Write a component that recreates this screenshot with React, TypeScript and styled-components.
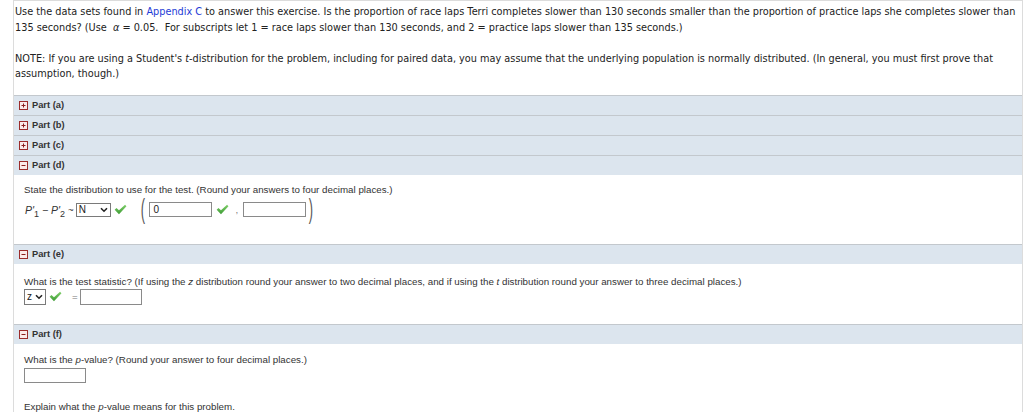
import React from "react";
import styled, { createGlobalStyle } from "styled-components";

const GlobalStyle = createGlobalStyle`
  html, body { margin: 0; padding: 0; background: #ffffff; }
  body { font-family: "Liberation Sans", Arial, sans-serif; }
`;

const Page = styled.div`
  padding: 0 1px 0 13px;
  width: 1024px;
  box-sizing: border-box;
`;

const Panel = styled.div`
  border: 1px solid #dcdcdc;
  border-bottom: none;
  min-height: 420px;
`;

const Intro = styled.div`
  font-family: "DejaVu Sans", Verdana, sans-serif;
  font-size: 9.74px;
  line-height: 15.5px;
  color: #222;
  padding: 3px 0 13px 1px;
`;

const Para = styled.p`
  margin: 0 0 15.5px 0;
  &:last-child { margin-bottom: 0; }
`;

const Link = styled.span`
  color: #1e3cd6;
`;

const Ital = styled.i`
  font-style: italic;
`;

const PartHeader = styled.div`
  height: 20px;
  box-sizing: border-box;
  background: #dce5ee;
  border-top: 1px solid #c3c8cd;
  display: flex;
  align-items: center;
  gap: 4px;
  padding-left: 5px;
  font-weight: bold;
  font-size: 9.3px;
  color: #333;
`;

const PartBody = styled.div<{ $pt: number; $pb: number }>`
  padding: ${(p) => p.$pt}px 10px ${(p) => p.$pb}px 10px;
  font-size: 9.75px;
  line-height: 14px;
  color: #333;
`;

const Line = styled.div<{ $mt?: number }>`
  margin-top: ${(p) => p.$mt ?? 0}px;
`;

const Row = styled.div<{ $h: number; $mt?: number }>`
  display: flex;
  align-items: center;
  height: ${(p) => p.$h}px;
  margin-top: ${(p) => p.$mt ?? 0}px;
`;

const MathExpr = styled.span`
  font-style: italic;
  font-size: 10.5px;
  color: #333;
  margin-left: 1px;
  white-space: nowrap;
  sub { font-size: 9px; font-style: normal; vertical-align: -3px; line-height: 0; }
`;

const Tilde = styled.span`
  margin: 0 2px 0 3px;
`;

const SelectBox = styled.div<{ $w: number; $h: number }>`
  width: ${(p) => p.$w}px;
  height: ${(p) => p.$h}px;
  box-sizing: border-box;
  border: 1px solid #7a7a7a;
  background: #fff;
  display: flex;
  align-items: center;
  justify-content: space-between;
  padding: 0 2px 0 2px;
  font-size: 10px;
  color: #222;
`;

const TextBox = styled.div<{ $w: number; $h: number }>`
  width: ${(p) => p.$w}px;
  height: ${(p) => p.$h}px;
  box-sizing: border-box;
  border: 1px solid #8a8a8a;
  background: #fff;
  display: flex;
  align-items: center;
  padding-left: 3px;
  font-size: 10px;
  color: #222;
`;

const CheckWrap = styled.span<{ $ml: number; $mr: number }>`
  display: inline-flex;
  margin: 0 ${(p) => p.$mr}px 0 ${(p) => p.$ml}px;
`;

const Paren = styled.span<{ $ml: number; $mr: number }>`
  display: inline-block;
  font-size: 17px;
  line-height: 1;
  color: #555;
  transform: scale(0.75, 1.6);
  margin: 0 ${(p) => p.$mr}px 0 ${(p) => p.$ml}px;
`;

const Sym = styled.span<{ $ml: number; $mr: number }>`
  color: #777;
  margin: 0 ${(p) => p.$mr}px 0 ${(p) => p.$ml}px;
`;

const Plus = () => (
  <svg width="9" height="9" viewBox="0 0 9 9">
    <rect x="0.5" y="0.5" width="8" height="8" fill="#fbeaea" stroke="#9b2b2b" />
    <path d="M2.5 4.5h4M4.5 2.5v4" stroke="#8b1f1f" strokeWidth="1" />
  </svg>
);

const Minus = () => (
  <svg width="9" height="9" viewBox="0 0 9 9">
    <rect x="0.5" y="0.5" width="8" height="8" fill="#fbeaea" stroke="#9b2b2b" />
    <path d="M2.5 4.5h4" stroke="#8b1f1f" strokeWidth="1" />
  </svg>
);

const Chevron = () => (
  <svg width="8" height="6" viewBox="0 0 8 6">
    <path d="M1 1.2 4 4.2 7 1.2" fill="none" stroke="#222" strokeWidth="1.6" />
  </svg>
);

const Check = () => (
  <svg width="13" height="11" viewBox="0 0 12 10">
    <defs>
      <linearGradient id="cg" x1="0" y1="0" x2="0" y2="1">
        <stop offset="0" stopColor="#7fcf6a" />
        <stop offset="1" stopColor="#3e9c35" />
      </linearGradient>
    </defs>
    <path d="M0.6 5.2 2.3 3.7 4.6 5.8 10.2 0.6 11.5 2 4.6 9.3Z" fill="url(#cg)" />
  </svg>
);

const parts = ["a", "b", "c"];

export default function App() {
  return (
    <>
      <GlobalStyle />
      <Page>
        <Panel>
          <Intro>
            <Para>
              Use the data sets found in <Link>Appendix C</Link> to answer this exercise. Is the
              proportion of race laps Terri completes slower than 130 seconds smaller than the
              proportion of practice laps she completes slower than 135 seconds? (Use&nbsp;&nbsp;<Ital>α</Ital> = 0.05.&nbsp;&nbsp;For
              subscripts let 1 = race laps slower than 130 seconds, and 2 = practice laps slower
              than 135 seconds.)
            </Para>
            <Para>
              NOTE: If you are using a Student's <Ital>t</Ital>-distribution for the problem,
              including for paired data, you may assume that the underlying population is normally
              distributed. (In general, you must first prove that assumption, though.)
            </Para>
          </Intro>

          {parts.map((p) => (
            <PartHeader key={p}>
              <Plus />
              <span>Part ({p})</span>
            </PartHeader>
          ))}

          <PartHeader>
            <Minus />
            <span>Part (d)</span>
          </PartHeader>
          <PartBody $pt={8} $pb={21}>
            <Line>
              State the distribution to use for the test. (Round your answers to four decimal places.)
            </Line>
            <Row $h={26}>
              <MathExpr>
                P'<sub>1</sub> − P'<sub>2</sub>
              </MathExpr>
              <Tilde>~</Tilde>
              <SelectBox $w={35} $h={14}>
                <span>N</span>
                <Chevron />
              </SelectBox>
              <CheckWrap $ml={3} $mr={13}>
                <Check />
              </CheckWrap>
              <Paren $ml={0} $mr={4}>(</Paren>
              <TextBox $w={63} $h={15}>0</TextBox>
              <CheckWrap $ml={4} $mr={6}>
                <Check />
              </CheckWrap>
              <Sym $ml={0} $mr={5}>,</Sym>
              <TextBox $w={63} $h={15} />
              <Paren $ml={2} $mr={0}>)</Paren>
            </Row>
          </PartBody>

          <PartHeader>
            <Minus />
            <span>Part (e)</span>
          </PartHeader>
          <PartBody $pt={11} $pb={19}>
            <Line>
              What is the test statistic? (If using the <Ital>z</Ital> distribution round your answer to
              two decimal places, and if using the <Ital>t</Ital> distribution round your answer to
              three decimal places.)
            </Line>
            <Row $h={16}>
              <SelectBox $w={22} $h={16}>
                <span>z</span>
                <Chevron />
              </SelectBox>
              <CheckWrap $ml={3} $mr={10}>
                <Check />
              </CheckWrap>
              <Sym $ml={0} $mr={2}>=</Sym>
              <TextBox $w={62} $h={16} />
            </Row>
          </PartBody>

          <PartHeader>
            <Minus />
            <span>Part (f)</span>
          </PartHeader>
          <PartBody $pt={9} $pb={20}>
            <Line>
              What is the <Ital>p</Ital>-value? (Round your answer to four decimal places.)
            </Line>
            <Row $h={15} $mt={1}>
              <TextBox $w={62} $h={15} />
            </Row>
            <Line $mt={17}>
              Explain what the <Ital>p</Ital>-value means for this problem.
            </Line>
          </PartBody>
        </Panel>
      </Page>
    </>
  );
}
